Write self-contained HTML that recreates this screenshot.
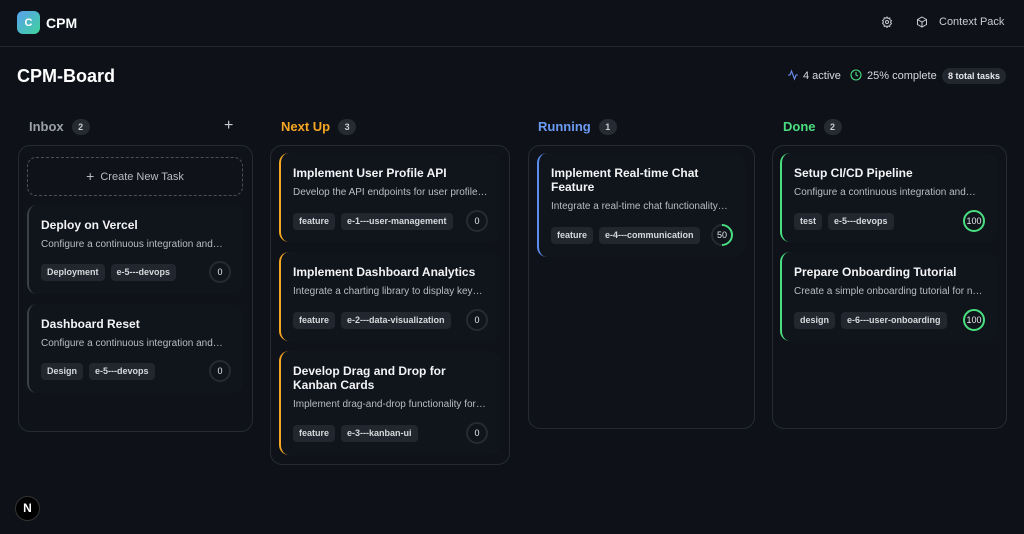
<!DOCTYPE html>
<html><head><meta charset="utf-8"><style>
*{box-sizing:border-box;margin:0;padding:0}
body{width:1024px;height:534px;background:#0e1118;font-family:"Liberation Sans",sans-serif;color:#fff;position:relative;overflow:hidden}
.hdr{position:absolute;left:0;top:0;width:1024px;height:47px;border-bottom:1px solid #232830}
.logo{position:absolute;left:17px;top:11px;width:23px;height:23px;border-radius:6px;background:linear-gradient(135deg,#5aa0f0,#3ed39a);font-size:11px;font-weight:bold;text-align:center;line-height:24px}
.brand{position:absolute;left:46px;top:15px;font-size:14px;font-weight:bold}
.abs{position:absolute}
h1{position:absolute;left:17px;top:66px;font-size:18px;font-weight:bold}
.stat{position:absolute;top:70px;font-size:11px;color:#d6d9de}
.pill{position:absolute;left:942px;top:68px;width:64px;height:16px;border-radius:8px;background:#22262e;font-size:9px;font-weight:bold;text-align:center;line-height:16px;color:#e6e8eb}
.col{position:absolute;top:145px;border:1px solid #262b33;border-radius:12px;background:#0f1219}
.ch{position:absolute;top:119px;font-size:13px;font-weight:bold}
.cnt{display:inline-block;margin-left:8px;width:18px;height:16px;border-radius:8px;background:#262a32;color:#c9ccd1;font-size:9px;text-align:center;line-height:16px;vertical-align:1px;font-weight:bold}
.card{position:absolute;border-left:2px solid;border-radius:10px;background:#10141b}
.card .t{position:absolute;left:12px;top:13px;font-size:12px;font-weight:bold;line-height:14px;color:#f3f4f6}
.card .d{position:absolute;left:12px;font-size:10px;color:#b8bcc3;white-space:nowrap}
.tags{position:absolute;left:12px;display:flex;gap:6px}
.tag{height:17px;padding:0 6px;border-radius:4px;background:#22262e;font-size:9px;font-weight:bold;line-height:17px;color:#d5d8dc}
.ring{position:absolute;right:12px;width:22px;height:22px;border-radius:50%;border:2px solid #262a32;font-size:9px;text-align:center;line-height:18px;color:#e5e7eb}
</style></head><body>
<div class="hdr">
<div class="logo">C</div><div class="brand">CPM</div>
<svg class="abs" style="left:881px;top:16px" width="12" height="12" viewBox="0 0 24 24" fill="none" stroke="#c9ccd1" stroke-width="2"><circle cx="12" cy="12" r="3"/><path d="M12 2l2 3 3.5-1 .5 3.5 3 2-2 3 2 3-3 2-.5 3.5-3.5-1-2 3-2-3-3.5 1L6 17l-3-2 2-3-2-3 3-2 .5-3.5 3.5 1z"/></svg>
<svg class="abs" style="left:916px;top:16px" width="12" height="12" viewBox="0 0 24 24" fill="none" stroke="#c9ccd1" stroke-width="2"><path d="M12 2l9 5v10l-9 5-9-5V7z M3 7l9 5 9-5 M12 12v10"/></svg>
<div class="abs" style="left:939px;top:16px;font-size:11px;color:#c9ccd1">Context Pack</div>
</div>
<h1>CPM-Board</h1>
<svg class="abs" style="left:787px;top:69px" width="12" height="12" viewBox="0 0 24 24" fill="none" stroke="#6b8ff0" stroke-width="2.2"><path d="M2 12h4l3-8 6 16 3-8h4"/></svg>
<div class="stat" style="left:803px">4 active</div>
<svg class="abs" style="left:850px;top:69px" width="12" height="12" viewBox="0 0 24 24" fill="none" stroke="#4ade80" stroke-width="2.2"><circle cx="12" cy="12" r="10"/><path d="M12 6v6l4 2"/></svg>
<div class="stat" style="left:867px">25% complete</div>
<div class="pill">8 total tasks</div>

<div class="ch" style="left:29px;color:#9ca0a8">Inbox<span class="cnt">2</span></div>
<div class="abs" style="left:224px;top:117px;font-size:16px;color:#c9ccd1">+</div>
<div class="ch" style="left:281px;color:#f5a623">Next Up<span class="cnt">3</span></div>
<div class="ch" style="left:538px;color:#6b9bf2">Running<span class="cnt">1</span></div>
<div class="ch" style="left:783px;color:#4ade80">Done<span class="cnt">2</span></div>

<div class="col" style="left:18px;width:235px;height:287px"></div>
<div class="col" style="left:270px;width:240px;height:320px"></div>
<div class="col" style="left:528px;width:227px;height:284px"></div>
<div class="col" style="left:772px;width:235px;height:284px"></div>

<div class="abs" style="left:27px;top:157px;width:216px;height:39px;border:1px dashed #4a4f58;border-radius:9px;text-align:center;line-height:37px;font-size:11px;color:#b8bcc3"><span style="font-size:14px;vertical-align:-1px">+</span>&nbsp; Create New Task</div>

<div class="card" style="left:27px;top:205px;width:216px;height:89px;border-color:#3a3f48"><div class="t">Deploy on Vercel</div><div class="d" style="top:34px">Configure a continuous integration and…</div><div class="tags" style="top:59px"><div class="tag">Deployment</div><div class="tag">e-5---devops</div></div><div class="ring" style="top:56px">0</div></div>
<div class="card" style="left:27px;top:304px;width:216px;height:89px;border-color:#3a3f48"><div class="t">Dashboard Reset</div><div class="d" style="top:34px">Configure a continuous integration and…</div><div class="tags" style="top:59px"><div class="tag">Design</div><div class="tag">e-5---devops</div></div><div class="ring" style="top:56px">0</div></div>

<div class="card" style="left:279px;top:153px;width:221px;height:89px;border-color:#f5a623"><div class="t">Implement User Profile API</div><div class="d" style="top:34px">Develop the API endpoints for user profile…</div><div class="tags" style="top:60px"><div class="tag">feature</div><div class="tag">e-1---user-management</div></div><div class="ring" style="top:57px">0</div></div>
<div class="card" style="left:279px;top:252px;width:221px;height:89px;border-color:#f5a623"><div class="t">Implement Dashboard Analytics</div><div class="d" style="top:34px">Integrate a charting library to display key…</div><div class="tags" style="top:60px"><div class="tag">feature</div><div class="tag">e-2---data-visualization</div></div><div class="ring" style="top:57px">0</div></div>
<div class="card" style="left:279px;top:351px;width:221px;height:104px;border-color:#f5a623"><div class="t">Develop Drag and Drop for<br>Kanban Cards</div><div class="d" style="top:48px">Implement drag-and-drop functionality for…</div><div class="tags" style="top:74px"><div class="tag">feature</div><div class="tag">e-3---kanban-ui</div></div><div class="ring" style="top:71px">0</div></div>

<div class="card" style="left:537px;top:153px;width:208px;height:104px;border-color:#5b8def"><div class="t">Implement Real-time Chat<br>Feature</div><div class="d" style="top:48px">Integrate a real-time chat functionality…</div><div class="tags" style="top:74px"><div class="tag">feature</div><div class="tag">e-4---communication</div></div><div class="ring" style="top:71px;border-color:#262a32 #4ade80 #4ade80 #262a32;transform:rotate(-45deg)"><span style="display:inline-block;transform:rotate(45deg)">50</span></div></div>

<div class="card" style="left:780px;top:153px;width:217px;height:89px;border-color:#4ade80"><div class="t">Setup CI/CD Pipeline</div><div class="d" style="top:34px">Configure a continuous integration and…</div><div class="tags" style="top:60px"><div class="tag">test</div><div class="tag">e-5---devops</div></div><div class="ring" style="top:57px;border-color:#4ade80">100</div></div>
<div class="card" style="left:780px;top:252px;width:217px;height:89px;border-color:#4ade80"><div class="t">Prepare Onboarding Tutorial</div><div class="d" style="top:34px">Create a simple onboarding tutorial for n…</div><div class="tags" style="top:60px"><div class="tag">design</div><div class="tag">e-6---user-onboarding</div></div><div class="ring" style="top:57px;border-color:#4ade80">100</div></div>

<div class="abs" style="left:15px;top:496px;width:25px;height:25px;border-radius:50%;background:#000;border:1px solid #333;text-align:center;line-height:23px;font-size:12px;font-weight:bold">N</div>
</body></html>
